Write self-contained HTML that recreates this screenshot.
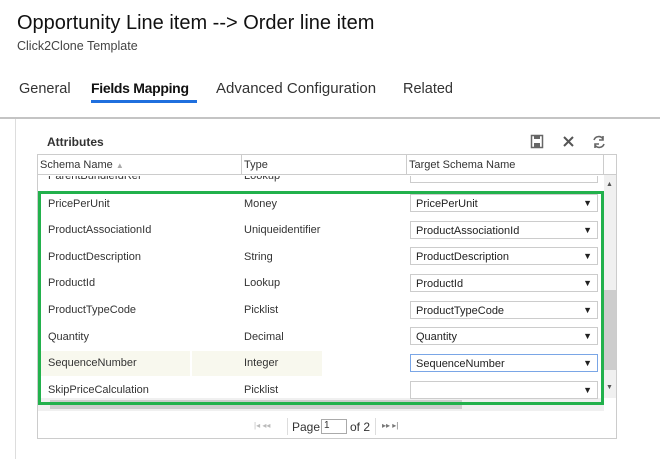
<!DOCTYPE html>
<html><head><meta charset="utf-8"><style>
*{margin:0;padding:0;box-sizing:border-box}
body{width:660px;height:459px;background:#fff;font-family:"Liberation Sans",Arial,sans-serif;position:relative;overflow:hidden;color:#333}
.a{position:absolute}
.t{font-size:11px;white-space:nowrap}
.sel{position:absolute;left:410px;width:188px;height:18px;border:1px solid #ccc;background:#fff;font-size:11px;padding:3px 0 0 5px;color:#222}
.sel:after{content:"▼";position:absolute;right:5px;top:3px;font-size:9px;color:#222}
.tab{position:absolute;top:2px;line-height:18px;white-space:nowrap}
</style></head><body>
<div class="a" style="left:17px;top:12px;font-size:20px;color:#111">Opportunity Line item --&gt; Order line item</div>
<div class="a" style="left:17px;top:39px;font-size:12.5px;color:#444">Click2Clone Template</div>
<div class="a" style="left:0;top:78px;width:660px;height:20px">
<div class="tab" style="left:19px;font-size:14.5px">General</div>
<div class="tab" style="left:91px;top:1px;font-size:14px;color:#111;font-weight:bold;letter-spacing:-0.3px">Fields Mapping</div>
<div class="tab" style="left:216px;font-size:15px">Advanced Configuration</div>
<div class="tab" style="left:403px;font-size:14.5px">Related</div>
</div>
<div class="a" style="left:91px;top:100px;width:106px;height:3px;background:#1f6fde"></div>
<div class="a" style="left:0;top:117px;width:660px;height:2px;background:#c4c4c4"></div>
<div class="a" style="left:15px;top:119px;width:1px;height:340px;background:#ddd"></div>
<div class="a" style="left:47px;top:135px;font-size:12px;font-weight:bold;color:#333">Attributes</div>
<svg class="a" style="left:530px;top:134px" width="80" height="16" viewBox="0 0 80 16">
<rect x="1.5" y="1.5" width="11" height="12" fill="none" stroke="#666" stroke-width="1.5"/><rect x="4" y="2" width="6" height="3" fill="#666"/><rect x="4" y="9" width="6" height="4" fill="#666"/>
<path d="M34 3 L43 12 M43 3 L34 12" stroke="#555" stroke-width="2"/>
<path d="M64 6 A5 5 0 0 1 73 5 M73 2 V6 H69 M74 10 A5 5 0 0 1 65 11 M65 14 V10 H69" fill="none" stroke="#666" stroke-width="1.6"/>
</svg>
<div class="a" style="left:37px;top:154px;width:580px;height:285px;border:1px solid #ccc"></div>
<div class="a" style="left:38px;top:155px;width:578px;height:20px;border-bottom:1px solid #ccc"></div>
<div class="a" style="left:241px;top:155px;width:1px;height:20px;background:#ccc"></div>
<div class="a" style="left:406px;top:155px;width:1px;height:20px;background:#ccc"></div>
<div class="a" style="left:603px;top:155px;width:1px;height:20px;background:#ccc"></div>
<div class="a t" style="left:40px;top:159px;font-size:11px">Schema Name <span style="color:#aaa;font-size:8px">▲</span></div>
<div class="a t" style="left:244px;top:159px;font-size:11px">Type</div>
<div class="a t" style="left:409px;top:159px;font-size:11px">Target Schema Name</div>
<div class="a" style="left:38px;top:176px;width:566px;height:10px;overflow:hidden">
<div class="a t" style="left:10px;top:-6px">ParentBundleIdRef</div>
<div class="a t" style="left:206px;top:-6px">Lookup</div>
<div class="a" style="left:372px;top:-10px;width:188px;height:17px;border:1px solid #ccc"></div>
</div>
<div class="a" style="left:604px;top:175px;width:12px;height:223px;background:#f0f0f0"></div>
<div class="a" style="left:604px;top:290px;width:12px;height:80px;background:#cdcdcd"></div>
<div class="a" style="left:606px;top:181px;font-size:7px;color:#555">▲</div>
<div class="a" style="left:606px;top:384px;font-size:7px;color:#555">▼</div>
<div class="a" style="left:38px;top:398px;width:566px;height:13px;background:#f0f0f0"></div>
<div class="a" style="left:50px;top:400px;width:412px;height:9px;background:#cdcdcd"></div>
<div class="a" style="left:38px;top:351px;width:152px;height:25px;background:#f8f8ee"></div>
<div class="a" style="left:192px;top:351px;width:130px;height:25px;background:#f8f8ee"></div>

<div class="a t" style="left:48px;top:198px">PricePerUnit</div><div class="a t" style="left:244px;top:198px">Money</div><div class="sel" style="top:194px">PricePerUnit</div>
<div class="a t" style="left:48px;top:224px">ProductAssociationId</div><div class="a t" style="left:244px;top:224px">Uniqueidentifier</div><div class="sel" style="top:221px">ProductAssociationId</div>
<div class="a t" style="left:48px;top:251px">ProductDescription</div><div class="a t" style="left:244px;top:251px">String</div><div class="sel" style="top:247px">ProductDescription</div>
<div class="a t" style="left:48px;top:277px">ProductId</div><div class="a t" style="left:244px;top:277px">Lookup</div><div class="sel" style="top:274px">ProductId</div>
<div class="a t" style="left:48px;top:304px">ProductTypeCode</div><div class="a t" style="left:244px;top:304px">Picklist</div><div class="sel" style="top:301px">ProductTypeCode</div>
<div class="a t" style="left:48px;top:331px">Quantity</div><div class="a t" style="left:244px;top:331px">Decimal</div><div class="sel" style="top:327px">Quantity</div>
<div class="a t" style="left:48px;top:357px">SequenceNumber</div><div class="a t" style="left:244px;top:357px">Integer</div><div class="sel" style="top:354px;border-color:#7aa6e6">SequenceNumber</div>
<div class="a t" style="left:48px;top:384px">SkipPriceCalculation</div><div class="a t" style="left:244px;top:384px">Picklist</div><div class="sel" style="top:381px"></div>
<div class="a" style="left:38px;top:191px;width:566px;height:214px;border:3px solid #22b14c"></div>
<div class="a t" style="left:254px;top:421px;font-size:8px;color:#bbb">|◂ ◂◂</div>
<div class="a" style="left:287px;top:418px;width:1px;height:17px;background:#ddd"></div>
<div class="a t" style="left:292px;top:420px;font-size:12px">Page</div>
<div class="a" style="left:321px;top:419px;width:26px;height:15px;border:1px solid #aaa;font-size:10px;padding-left:2px">1</div>
<div class="a t" style="left:350px;top:420px;font-size:12px">of 2</div>
<div class="a" style="left:375px;top:418px;width:1px;height:17px;background:#ddd"></div>
<div class="a t" style="left:382px;top:421px;font-size:8px;color:#777">▸▸ ▸|</div>
</body></html>
